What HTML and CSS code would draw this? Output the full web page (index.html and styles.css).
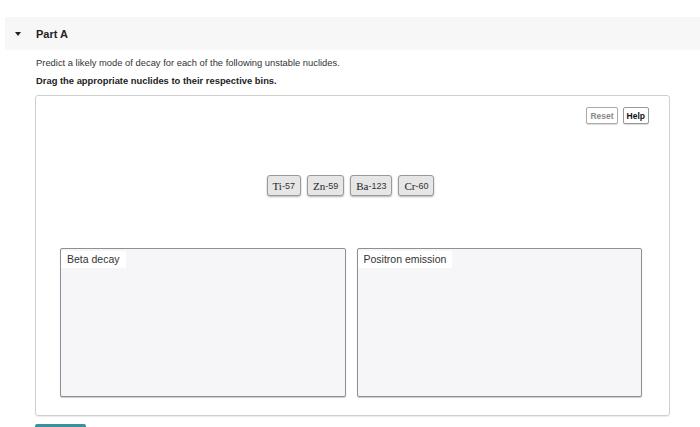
FILE: index.html
```html
<!DOCTYPE html>
<html>
<head>
<meta charset="UTF-8">
<title>Part A</title>
<link rel="stylesheet" href="styles.css">
</head>
<body>
  <div class="parte">
    <div class="cabecera">
      <span class="flecha"></span>
      <span class="titulo">Part A</span>
    </div>
    <div class="contenido">
      <p class="enunciado">Predict a likely mode of decay for each of the following unstable nuclides.</p>
      <p class="instruccion">Drag the appropriate nuclides to their respective bins.</p>

      <div class="caja">
        <div class="botones">
          <button class="boton reset">Reset</button>
          <button class="boton">Help</button>
        </div>

        <div class="fichas">
          <div class="ficha"><span class="sim">Ti</span>-57</div>
          <div class="ficha"><span class="sim">Zn</span>-59</div>
          <div class="ficha"><span class="sim">Ba</span>-123</div>
          <div class="ficha"><span class="sim">Cr</span>-60</div>
        </div>

        <div class="bins">
          <div class="bin"><span class="etiqueta">Beta decay</span></div>
          <div class="bin"><span class="etiqueta">Positron emission</span></div>
        </div>
      </div>
      <div class="enviar"></div>
    </div>
  </div>
</body>
</html>
```

FILE: styles.css
```css
* {
  margin: 0;
  padding: 0;
  box-sizing: border-box;
}

body {
  background: #fff;
  font-family: "Liberation Sans", Arial, sans-serif;
  color: #222;
  height: 427px;
  overflow: hidden;
}

.parte {
  padding-top: 17px;
}

.cabecera {
  margin-left: 5px;
  height: 33px;
  background: #f7f7f7;
  display: flex;
  align-items: center;
}

.flecha {
  width: 0;
  height: 0;
  margin-left: 10px;
  border-left: 3.5px solid transparent;
  border-right: 3.5px solid transparent;
  border-top: 4px solid #222;
}

.titulo {
  margin-left: 15px;
  font-size: 11px;
  font-weight: bold;
  color: #222;
}

.contenido {
  padding: 0 30px 0 35px;
}

.enunciado {
  margin-top: 7px;
  margin-left: 1px;
  font-size: 9.4px;
  line-height: 12px;
  color: #333;
}

.instruccion {
  margin-top: 6px;
  margin-left: 1px;
  font-size: 9.4px;
  line-height: 12px;
  font-weight: bold;
  color: #222;
}

.caja {
  margin-top: 8px;
  height: 321px;
  border: 1px solid #cfcfcf;
  border-radius: 3px;
  box-shadow: 0 1px 1px rgba(0, 0, 0, 0.08);
  padding: 11px 20px 0 24px;
}

.botones {
  display: flex;
  justify-content: flex-end;
  gap: 5px;
}

.boton {
  font-family: "Liberation Sans", Arial, sans-serif;
  font-size: 8.5px;
  font-weight: bold;
  color: #111;
  background: #fff;
  border: 1px solid #999;
  border-radius: 2px;
  height: 17px;
  padding: 0 3px;
  box-shadow: 0 1px 1px rgba(0, 0, 0, 0.15);
}

.boton.reset {
  color: #888;
  border-color: #aaa;
}

.fichas {
  margin-top: 51px;
  display: flex;
  justify-content: center;
  gap: 6px;
  padding-right: 8px;
}

.ficha {
  height: 21px;
  padding: 0 5px;
  display: flex;
  align-items: center;
  font-size: 9px;
  color: #333;
  background: #e6e6e6;
  border: 1px solid #9a9a9a;
  border-radius: 3px;
  box-shadow: 0 1px 2px rgba(0, 0, 0, 0.3);
}

.sim {
  font-family: "Liberation Serif", "Times New Roman", serif;
  font-size: 11px;
  color: #222;
}

.bins {
  margin-top: 52px;
  display: flex;
  gap: 11px;
  padding-right: 7px;
}

.bin {
  flex: 1;
  height: 149px;
  background: #f6f6f8;
  border: 1px solid #8e8e98;
  border-radius: 2px;
  box-shadow: 0 1px 1px rgba(0, 0, 0, 0.2);
}

.etiqueta {
  display: inline-block;
  background: #fff;
  font-size: 10.5px;
  color: #333;
  padding: 2px 6px 3px 6px;
}

.enviar {
  margin-top: 8px;
  width: 51px;
  height: 3px;
  background: #3d8ea0;
  border-radius: 2px 2px 0 0;
}
```
